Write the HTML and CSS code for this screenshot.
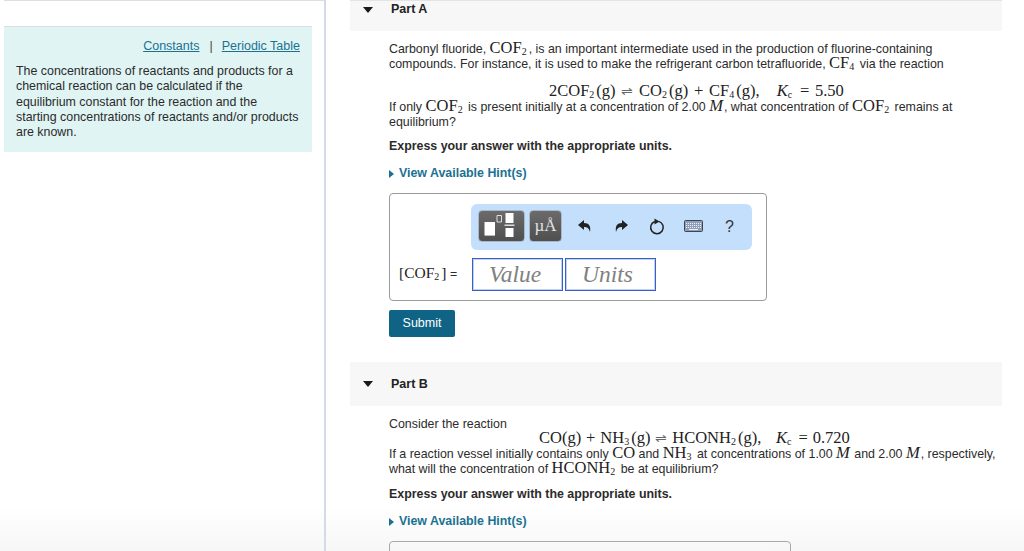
FILE: index.html
```html
<!DOCTYPE html>
<html lang="en">
<head>
<meta charset="utf-8">
<title>Part A and Part B</title>
<link rel="stylesheet" href="styles.css">
</head>
<body>
<div class="page">
  <aside class="side">
    <div class="info">
      <div class="links"><a href="#">Constants</a><span class="sep">|</span><a href="#">Periodic Table</a></div>
      <p>The concentrations of reactants and products for a<br>chemical reaction can be calculated if the<br>equilibrium constant for the reaction and the<br>starting concentrations of reactants and/or products<br>are known.</p>
    </div>
  </aside>
  <main class="main">
    <section class="part">
      <header class="bar bar-a"><svg class="caret" width="10" height="6" viewBox="0 0 10 6"><path d="M0 0h10L5 6z"/></svg><h2>Part A</h2></header>
      <div class="body body-a">
        <p class="lines">Carbonyl fluoride, <span class="m">COF<sub>2</sub></span>, is an important intermediate used in the production of fluorine-containing<br>compounds. For instance, it is used to make the refrigerant carbon tetrafluoride, <span class="m">CF<sub>4</sub></span> via the reaction</p>
        <div class="eq eq-a"><span class="m">2COF<sub>2</sub>(g) <span class="arrows">⇌</span> CO<sub>2</sub>(g) + CF<sub>4</sub>(g),&nbsp;&nbsp;&nbsp;<i>K</i><sub>c</sub> = 5.50</span></div>
        <p class="lines">If only <span class="m">COF<sub>2</sub></span> is present initially at a concentration of 2.00 <span class="m"><i class="mol">M</i></span>, what concentration of <span class="m">COF<sub>2</sub></span> remains at<br>equilibrium?</p>
        <p class="bold">Express your answer with the appropriate units.</p>
        <a class="hint" href="#"><svg width="5" height="8" viewBox="0 0 5 8"><path d="M0 0l5 4-5 4z"/></svg>View Available Hint(s)</a>
        <div class="answer">
          <div class="toolbar">
            <div class="tools">
              <span class="key key-wide"><svg width="38" height="30" viewBox="0 0 38 30"><path fill="#fff" d="M1.500 11H12v13.600H1.500z"/><path fill="none" stroke="#ddd" d="M14 4.500h4.500v6.500H14z"/><path fill="#fff" d="M22.500 2h8v10h-8zM22.500 17h8v9h-8z"/><path fill="#ddd" d="M21.500 13.500h10V15h-10z"/></svg></span>
              <span class="key key-unit">µÅ</span>
              <svg class="tool t-undo" width="14" height="14" viewBox="0 0 14 14"><path d="M6 1L0 6l6 5V8c3 0 5 1 6 5 1-6-1-9-6-9z"/></svg>
              <svg class="tool t-redo" width="14" height="14" viewBox="0 0 14 14"><path d="M8 1l6 5-6 5V8c-3 0-5 1-6 5-1-6 1-9 6-9z"/></svg>
              <svg class="tool t-reset" width="16" height="17" viewBox="0 0 16 17"><path fill="none" stroke="#222" stroke-width="1.500" d="M9.800 3.400a6.300 6.300 0 1 1-4 .1"/><path fill="#222" d="M5.500 0.500l5 3-5 3z"/></svg>
              <svg class="tool t-kbd" width="19" height="12" viewBox="0 0 19 12"><rect x=".5" y=".5" width="18" height="11" rx="1" fill="#8f9fb5" stroke="#3c4654"/><path stroke="#eef" stroke-dasharray="1 1" d="M2 3.500h15M2 5.500h15M2 7.500h15"/><path stroke="#eef" d="M5 9.500h9"/></svg>
              <span class="tool t-help">?</span>
            </div>
          </div>
          <div class="entry">
            <span class="label"><span class="m">[COF<sub>2</sub>]</span> =</span>
            <span class="field">Value</span><span class="field">Units</span>
          </div>
        </div>
        <button class="submit" type="button">Submit</button>
      </div>
    </section>
    <section class="part part-b">
      <header class="bar bar-b"><svg class="caret" width="10" height="6" viewBox="0 0 10 6"><path d="M0 0h10L5 6z"/></svg><h2>Part B</h2></header>
      <div class="body body-b">
        <p class="lines">Consider the reaction</p>
        <div class="eq eq-b"><span class="m">CO(g) + NH<sub>3</sub>(g) <span class="arrows">⇌</span> HCONH<sub>2</sub>(g),&nbsp;&nbsp;&nbsp;<i>K</i><sub>c</sub> = 0.720</span></div>
        <p class="lines">If a reaction vessel initially contains only <span class="m">CO</span> and <span class="m">NH<sub>3</sub></span> at concentrations of 1.00 <span class="m"><i class="mol">M</i></span> and 2.00 <span class="m"><i class="mol">M</i></span>, respectively,<br>what will the concentration of <span class="m">HCONH<sub>2</sub></span> be at equilibrium?</p>
        <p class="bold bold-b">Express your answer with the appropriate units.</p>
        <a class="hint" href="#"><svg width="5" height="8" viewBox="0 0 5 8"><path d="M0 0l5 4-5 4z"/></svg>View Available Hint(s)</a>
        <div class="answer answer-next"></div>
      </div>
    </section>
  </main>
</div>
</body>
</html>
```
FILE: styles.css
```css
* { box-sizing: border-box; }
html, body { margin: 0; height: 551px; overflow: hidden; background: #fff; }
body { font: 12.4px/15.3px "Liberation Sans", Arial, sans-serif; color: #2b2b2b; }
p, h2 { margin: 0; }
a { color: #1b7191; }

.page { display: flex; height: 551px; overflow: hidden; background: linear-gradient(#fff 505px, #f7f7f7 551px); }
.side { width: 326px; flex: none; padding: 26px 0 0 4px; border-right: 2px solid #d3dce6; background: linear-gradient(#dcdfe3, #dcdfe3) 4px 0 / 100% 1px no-repeat; }
.info { width: 308px; height: 126px; background: #e0f4f4; border-top: 1px solid #d8e2e4; padding: 12px 12px 0; white-space: nowrap; }
.links { text-align: right; height: 18px; font-size: 12.5px; }
.sep { margin: 0 9px 0 10px; color: #444; }
.links + p { margin-top: 7px; }

.main { flex: none; width: 652px; margin-left: 24px; }
.bar { display: flex; background: #f7f7f7; }
.bar-a { height: 31px; padding-top: 1px; border-top: 1px solid #e4e4e4; }
.bar-b { height: 44px; align-items: center; padding-top: 1px; }
.caret { margin-left: 13px; flex: none; fill: #1a1a1a; }
.bar-a .caret { margin-top: 5px; }
h2 { font-size: 12.5px; font-weight: bold; margin-left: 18px; color: #222; }
.body { padding-left: 39px; }
.body-a { padding-top: 11px; }
.body-b { padding-top: 11px; }
.lines { line-height: 15.3px; }
.m { font-family: "Liberation Serif", "Times New Roman", serif; font-size: 16.5px; line-height: 0; color: #222; }
.m sub { font-size: 10px; line-height: 0; vertical-align: -2px; margin-right: 2px; }
.mol { padding-right: 1px; }
.arrows { font-size: 14px; color: #666; }
.eq { line-height: 15px; height: 15px; white-space: nowrap; }
.eq-a { margin: 12px 0 0 160px; word-spacing: 1.6px; }
.eq-b { margin: 0 0 0 150px; word-spacing: 0.8px; }
.bold { font-weight: bold; margin-top: 9px; }
.bold-b { margin-top: 9px; }
.hint { display: flex; align-items: center; margin-top: 12px; font-weight: bold; text-decoration: none; }
.hint svg { fill: #1b7191; margin-right: 5px; }

.answer { width: 378px; height: 108px; margin-top: 11px; border: 1px solid #9a9a9a; border-radius: 4px; padding: 10px 0 0 80px; }
.toolbar { width: 281px; height: 46px; background: #c4dffc; border-radius: 6px; padding: 6px 0 0 7px; margin-left: 1px; }
.tools { display: flex; align-items: center; height: 33px; }
.key { height: 32px; border-radius: 4px; background: linear-gradient(#6b6b6b, #4f4f4f); border: 1px solid #aab7c6; color: #e4e4e4; display: flex; align-items: center; justify-content: center; }
.key-wide { width: 47px; }
.key-unit { width: 33px; margin-left: 4px; font: 17px "Liberation Serif", serif; }
.tool { flex: none; fill: #222; }
.t-undo { margin-left: 16px; }
.t-redo { margin-left: 22px; }
.t-reset { margin-left: 21px; }
.t-kbd { margin-left: 19px; }
.t-help { margin-left: 22px; font-size: 16px; color: #333; }
.entry { display: flex; align-items: center; margin-top: 8px; margin-left: -71px; }
.label { width: 73px; }
.label .m { font-size: 15.5px; }
.field { width: 91px; height: 33px; border: 1px solid #3460c8; box-shadow: inset 0 0 0 1px #c3d0ee; margin-right: 2px; padding-left: 16px; font: italic 23.500px/31px "Liberation Serif", serif; color: #808080; }
.submit { display: block; width: 66px; height: 27px; margin-top: 9px; border: 0; border-radius: 2px; background: #0f6485; color: #fff; font: 12.5px "Liberation Sans", Arial, sans-serif; padding: 0 0 0 0; }
.part-b { margin-top: 25px; }
.answer-next { width: 402px; height: 40px; margin-top: 12px; padding: 0; border-color: #a8a8a8; }
```
